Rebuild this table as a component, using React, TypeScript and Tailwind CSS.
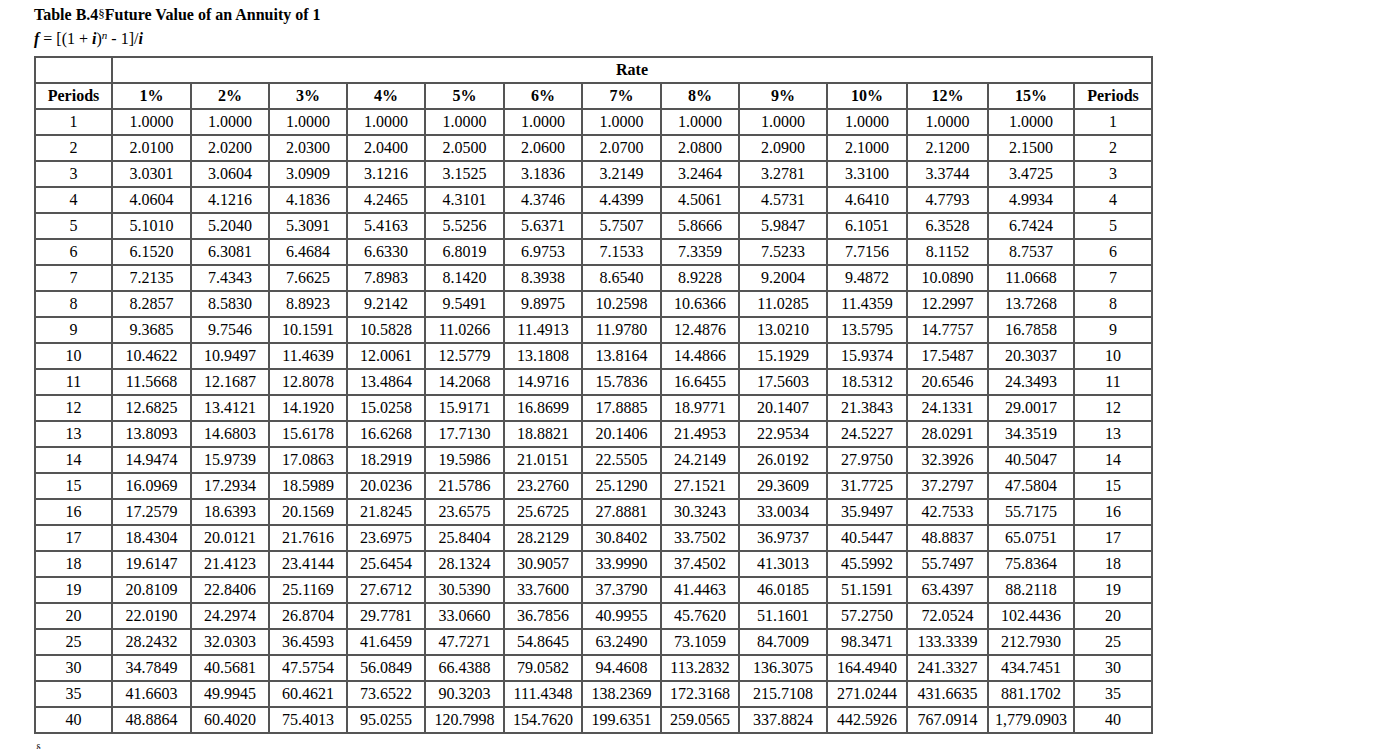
import React from 'react';

const rates = ['1%', '2%', '3%', '4%', '5%', '6%', '7%', '8%', '9%', '10%', '12%', '15%'];

// widths in px, first and last are the Periods columns
const colWidths = ['w-[77px]', 'w-[79px]', 'w-[78px]', 'w-[78px]', 'w-[78px]', 'w-[79px]', 'w-[78px]', 'w-[79px]', 'w-[78px]', 'w-[88px]', 'w-[80px]', 'w-[81px]', 'w-[86px]', 'w-[78px]'];

const rows: [string, string[]][] = [
    ['1', ['1.0000', '1.0000', '1.0000', '1.0000', '1.0000', '1.0000', '1.0000', '1.0000', '1.0000', '1.0000', '1.0000', '1.0000']],
    ['2', ['2.0100', '2.0200', '2.0300', '2.0400', '2.0500', '2.0600', '2.0700', '2.0800', '2.0900', '2.1000', '2.1200', '2.1500']],
    ['3', ['3.0301', '3.0604', '3.0909', '3.1216', '3.1525', '3.1836', '3.2149', '3.2464', '3.2781', '3.3100', '3.3744', '3.4725']],
    ['4', ['4.0604', '4.1216', '4.1836', '4.2465', '4.3101', '4.3746', '4.4399', '4.5061', '4.5731', '4.6410', '4.7793', '4.9934']],
    ['5', ['5.1010', '5.2040', '5.3091', '5.4163', '5.5256', '5.6371', '5.7507', '5.8666', '5.9847', '6.1051', '6.3528', '6.7424']],
    ['6', ['6.1520', '6.3081', '6.4684', '6.6330', '6.8019', '6.9753', '7.1533', '7.3359', '7.5233', '7.7156', '8.1152', '8.7537']],
    ['7', ['7.2135', '7.4343', '7.6625', '7.8983', '8.1420', '8.3938', '8.6540', '8.9228', '9.2004', '9.4872', '10.0890', '11.0668']],
    ['8', ['8.2857', '8.5830', '8.8923', '9.2142', '9.5491', '9.8975', '10.2598', '10.6366', '11.0285', '11.4359', '12.2997', '13.7268']],
    ['9', ['9.3685', '9.7546', '10.1591', '10.5828', '11.0266', '11.4913', '11.9780', '12.4876', '13.0210', '13.5795', '14.7757', '16.7858']],
    ['10', ['10.4622', '10.9497', '11.4639', '12.0061', '12.5779', '13.1808', '13.8164', '14.4866', '15.1929', '15.9374', '17.5487', '20.3037']],
    ['11', ['11.5668', '12.1687', '12.8078', '13.4864', '14.2068', '14.9716', '15.7836', '16.6455', '17.5603', '18.5312', '20.6546', '24.3493']],
    ['12', ['12.6825', '13.4121', '14.1920', '15.0258', '15.9171', '16.8699', '17.8885', '18.9771', '20.1407', '21.3843', '24.1331', '29.0017']],
    ['13', ['13.8093', '14.6803', '15.6178', '16.6268', '17.7130', '18.8821', '20.1406', '21.4953', '22.9534', '24.5227', '28.0291', '34.3519']],
    ['14', ['14.9474', '15.9739', '17.0863', '18.2919', '19.5986', '21.0151', '22.5505', '24.2149', '26.0192', '27.9750', '32.3926', '40.5047']],
    ['15', ['16.0969', '17.2934', '18.5989', '20.0236', '21.5786', '23.2760', '25.1290', '27.1521', '29.3609', '31.7725', '37.2797', '47.5804']],
    ['16', ['17.2579', '18.6393', '20.1569', '21.8245', '23.6575', '25.6725', '27.8881', '30.3243', '33.0034', '35.9497', '42.7533', '55.7175']],
    ['17', ['18.4304', '20.0121', '21.7616', '23.6975', '25.8404', '28.2129', '30.8402', '33.7502', '36.9737', '40.5447', '48.8837', '65.0751']],
    ['18', ['19.6147', '21.4123', '23.4144', '25.6454', '28.1324', '30.9057', '33.9990', '37.4502', '41.3013', '45.5992', '55.7497', '75.8364']],
    ['19', ['20.8109', '22.8406', '25.1169', '27.6712', '30.5390', '33.7600', '37.3790', '41.4463', '46.0185', '51.1591', '63.4397', '88.2118']],
    ['20', ['22.0190', '24.2974', '26.8704', '29.7781', '33.0660', '36.7856', '40.9955', '45.7620', '51.1601', '57.2750', '72.0524', '102.4436']],
    ['25', ['28.2432', '32.0303', '36.4593', '41.6459', '47.7271', '54.8645', '63.2490', '73.1059', '84.7009', '98.3471', '133.3339', '212.7930']],
    ['30', ['34.7849', '40.5681', '47.5754', '56.0849', '66.4388', '79.0582', '94.4608', '113.2832', '136.3075', '164.4940', '241.3327', '434.7451']],
    ['35', ['41.6603', '49.9945', '60.4621', '73.6522', '90.3203', '111.4348', '138.2369', '172.3168', '215.7108', '271.0244', '431.6635', '881.1702']],
    ['40', ['48.8864', '60.4020', '75.4013', '95.0255', '120.7998', '154.7620', '199.6351', '259.0565', '337.8824', '442.5926', '767.0914', '1,779.0903']],
];

const cell = 'border border-[#555] h-[26px] p-0 text-center align-middle';

const App = () => {
    return (
        <div className="min-h-screen bg-white text-black font-['Liberation_Serif','Times_New_Roman',serif] pl-[34px] pt-[5px]">
            <p className="text-[16px] font-bold leading-[19px]">
                Table B.4<sup className="text-[13px] font-normal relative -top-[2px]">§</sup>Future Value of an Annuity of 1
            </p>
            <p className="text-[16px] leading-[19px] mt-[5px]">
                <i className="font-bold">f</i> = [(1 + <i className="font-bold">i</i>)<sup className="italic text-[11px]">n</sup> - 1]/<i className="font-bold">i</i>
            </p>
            <table className="mt-[8px] border border-[#555] border-separate border-spacing-0 table-fixed text-[16px] leading-[18px]">
                <colgroup>
                    {colWidths.map((w, i) => (
                        <col key={i} className={w} />
                    ))}
                </colgroup>
                <tbody>
                    <tr>
                        <td className={cell}></td>
                        <td className={`${cell} font-bold`} colSpan={13}>
                            Rate
                        </td>
                    </tr>
                    <tr>
                        <td className={`${cell} font-bold`}>Periods</td>
                        {rates.map((r) => (
                            <td key={r} className={`${cell} font-bold`}>
                                {r}
                            </td>
                        ))}
                        <td className={`${cell} font-bold`}>Periods</td>
                    </tr>
                    {rows.map(([period, values]) => (
                        <tr key={period}>
                            <td className={cell}>{period}</td>
                            {values.map((v, i) => (
                                <td key={i} className={cell}>
                                    {v}
                                </td>
                            ))}
                            <td className={cell}>{period}</td>
                        </tr>
                    ))}
                </tbody>
            </table>
            <p className="text-[10px] leading-[12px] mt-[8px] ml-[2px]">§</p>
        </div>
    );
};

export default App;
